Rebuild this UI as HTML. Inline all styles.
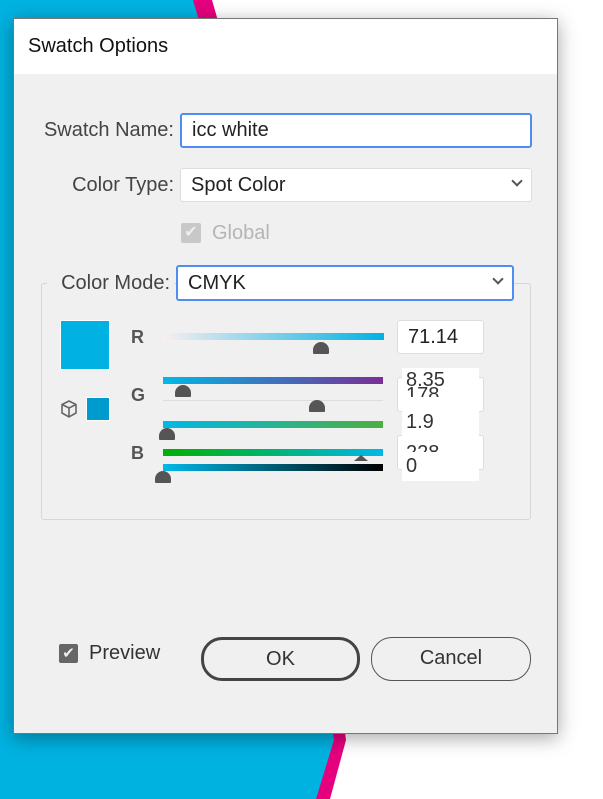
<!DOCTYPE html>
<html><head><style>
*{margin:0;padding:0;box-sizing:border-box}
body{width:603px;height:799px;position:relative;overflow:hidden;background:#fff;font-family:"Liberation Sans",sans-serif;color:#333}
.a{position:absolute}
.dlg{left:13px;top:18px;width:545px;height:716px;background:#f0f0f0;border:1px solid #777;box-shadow:0 4px 18px rgba(0,0,0,.35)}
.title{left:0;top:0;width:543px;height:55px;background:#fff;font-size:20px;color:#111;padding:16px 0 0 14px}
.lbl{font-size:20px;color:#444;text-align:right}
.box{background:#fff;border:1px solid #ddd;border-radius:3px;font-size:20px;color:#222;padding-left:10px}
.tr{height:7px}
.th{width:16px;height:12px;background:#555;border-radius:8px 8px 1px 1px}
.btn{border-radius:21px;font-size:20px;text-align:center;line-height:40px;color:#333}
.chev{position:absolute;right:10px;top:8px;width:8px;height:8px;border-right:2px solid #555;border-bottom:2px solid #555;transform:rotate(45deg)}
</style></head><body>
<svg class="a" style="left:0;top:0" width="603" height="799">
<path d="M0 0 L212 0 Q285 250 346 740 L330 799 L0 799 Z" fill="#e5007e"/>
<path d="M0 0 L193 0 Q268 250 334 740 L316 799 L0 799 Z" fill="#00b2e0"/>
</svg>
<div class="a dlg">
<div class="a title">Swatch Options</div>
<div class="a lbl" style="left:0px;top:100px;width:160px">Swatch Name:</div>
<div class="a box" style="left:166px;top:94px;width:352px;height:35px;border:2px solid #4d8ef0;line-height:31px">icc white</div>
<div class="a lbl" style="left:0px;top:155px;width:160px">Color Type:</div>
<div class="a box" style="left:166px;top:149px;width:352px;height:34px;line-height:32px">Spot Color<div class="chev"></div></div>
<div class="a" style="left:167px;top:204px;width:20px;height:20px;background:#c8c8c8;border-radius:2px;color:#eee;font-size:16px;text-align:center;line-height:20px">✔</div>
<div class="a" style="left:198px;top:203px;font-size:20px;color:#b5b5b5">Global</div>
<div class="a" style="left:27px;top:264px;width:490px;height:237px;border:1px solid #d6d6d6;border-radius:3px"></div>
<div class="a lbl" style="left:33px;top:253px;width:127px;background:#f0f0f0;padding-right:4px">Color Mode:</div>
<div class="a box" style="left:162px;top:246px;width:338px;height:36px;border:2px solid #4d8ef0;line-height:32px">CMYK<div class="chev"></div></div>
<div class="a" style="left:46px;top:301px;width:50px;height:50px;background:#00b2e3;border:1px solid #fff"></div>
<svg class="a" style="left:45px;top:380px" width="20" height="20" viewBox="0 0 20 20"><path d="M10 2 L17 5.5 V14 L10 18 L3 14 V5.5 Z M3 5.5 L10 9 L17 5.5 M10 9 V18" fill="none" stroke="#666" stroke-width="1.6"/></svg>
<div class="a" style="left:72px;top:378px;width:24px;height:24px;background:#009bcd;border:1px solid #fff"></div>
<div class="a" style="left:117px;top:308px;font-size:18px;font-weight:bold;color:#555">R</div>
<div class="a" style="left:117px;top:366px;font-size:18px;font-weight:bold;color:#555">G</div>
<div class="a" style="left:117px;top:424px;font-size:18px;font-weight:bold;color:#555">B</div>
<div class="a tr" style="left:148px;top:314px;width:222px;background:linear-gradient(90deg,#fbeef0,#00b2e3)"></div>
<div class="a th" style="left:299px;top:323px"></div>
<div class="a tr" style="left:149px;top:358px;width:220px;background:linear-gradient(90deg,#00b8e8,#7a2e96)"></div>
<div class="a th" style="left:161px;top:366px"></div>
<div class="a" style="left:149px;top:381px;width:220px;height:1px;background:#ddd"></div>
<div class="a th" style="left:295px;top:381px"></div>
<div class="a tr" style="left:149px;top:402px;width:220px;background:linear-gradient(90deg,#00b8e8,#4caf40)"></div>
<div class="a th" style="left:145px;top:409px"></div>
<div class="a tr" style="left:149px;top:430px;width:220px;background:linear-gradient(90deg,#00b000,#00b8e8)"></div>
<div class="a" style="left:340px;top:436px;width:0;height:0;border-left:7px solid transparent;border-right:7px solid transparent;border-bottom:6px solid #555"></div>
<div class="a tr" style="left:149px;top:445px;width:220px;background:linear-gradient(90deg,#00b8e8,#000)"></div>
<div class="a th" style="left:141px;top:452px"></div>
<div class="a box" style="left:383px;top:301px;width:87px;height:34px;line-height:32px">71.14</div>
<div class="a box" style="left:383px;top:358px;width:87px;height:35px"></div>
<div class="a box" style="left:383px;top:416px;width:87px;height:35px"></div>
<div class="a" style="left:388px;top:349px;width:77px;height:113px;background:#fff;font-size:20px;color:#333">
<div class="a" style="left:4px;top:17px;height:12px;overflow:hidden;line-height:20px">178</div>
<div class="a" style="left:4px;top:1px">8.35</div>
<div class="a" style="left:4px;top:43px">1.9</div>
<div class="a" style="left:4px;top:72px;height:12px;overflow:hidden;line-height:26px">228</div>
<div class="a" style="left:4px;top:87px">0</div>
</div>
<div class="a" style="left:45px;top:625px;width:19px;height:19px;background:#666;border-radius:2px;color:#eee;font-size:15px;text-align:center;line-height:19px">✔</div>
<div class="a" style="left:75px;top:623px;font-size:20px;color:#333">Preview</div>
<div class="a btn" style="left:187px;top:618px;width:159px;height:44px;border:3px solid #444;line-height:38px">OK</div>
<div class="a btn" style="left:357px;top:618px;width:160px;height:44px;border:1.5px solid #555">Cancel</div>
</div>
</body></html>
